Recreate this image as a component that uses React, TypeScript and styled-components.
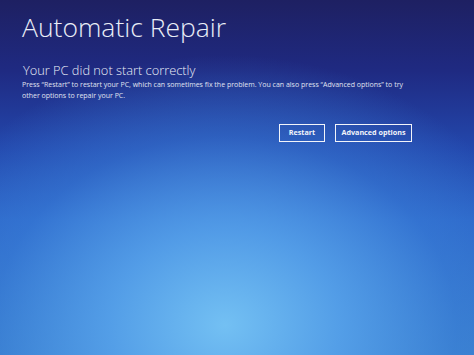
import React from 'react'
import styled, { createGlobalStyle } from 'styled-components'

const GlobalStyle = createGlobalStyle`
  html, body {
    margin: 0;
    padding: 0;
  }
  body {
    font-family: "Open Sans", "Noto Sans", sans-serif;
  }
`

const Screen = styled.div`
  width: 474px;
  height: 355px;
  overflow: hidden;
  box-sizing: border-box;
  padding: 10px 62px 0 22px;
  color: #e9edf7;
  background:
    radial-gradient(ellipse 330px 270px at 225px 325px, rgba(115, 192, 243, 1) 0%, rgba(88, 164, 236, 0.85) 35%, rgba(60, 130, 220, 0.45) 70%, rgba(45, 105, 205, 0) 100%),
    linear-gradient(180deg, #1e2062 0%, #1f2a82 20%, #2348ad 42%, #2c66c8 62%, #3a80cc 100%);
`

const Title = styled.h1`
  margin: 0;
  font-weight: 300;
  font-size: 26.5px;
  line-height: 34px;
`

const Subtitle = styled.h2`
  margin: 18px 0 0 1px;
  font-weight: 300;
  font-size: 12.8px;
  line-height: 17px;
`

const Body = styled.p`
  margin: 0;
  font-size: 7px;
  line-height: 11px;
  max-width: 392px;
  opacity: 0.95;
`

const Actions = styled.div`
  display: flex;
  justify-content: flex-end;
  gap: 10px;
  margin-top: 23px;
`

const Button = styled.button<{ $wide?: boolean }>`
  box-sizing: border-box;
  height: 18px;
  width: ${p => (p.$wide ? '77px' : '46px')};
  padding: 0;
  border: 1.5px solid #f2f4fa;
  background: transparent;
  color: #f2f4fa;
  font-family: "Open Sans", "Noto Sans", sans-serif;
  font-weight: 700;
  font-size: 7.2px;
  line-height: 1;
`

export default function App() {
  return (
    <>
      <GlobalStyle />
      <Screen>
        <Title>Automatic Repair</Title>
        <Subtitle>Your PC did not start correctly</Subtitle>
        <Body>
          Press “Restart” to restart your PC, which can sometimes fix the problem. You can also press “Advanced options” to try
          other options to repair your PC.
        </Body>
        <Actions>
          <Button>Restart</Button>
          <Button $wide>Advanced options</Button>
        </Actions>
      </Screen>
    </>
  )
}
